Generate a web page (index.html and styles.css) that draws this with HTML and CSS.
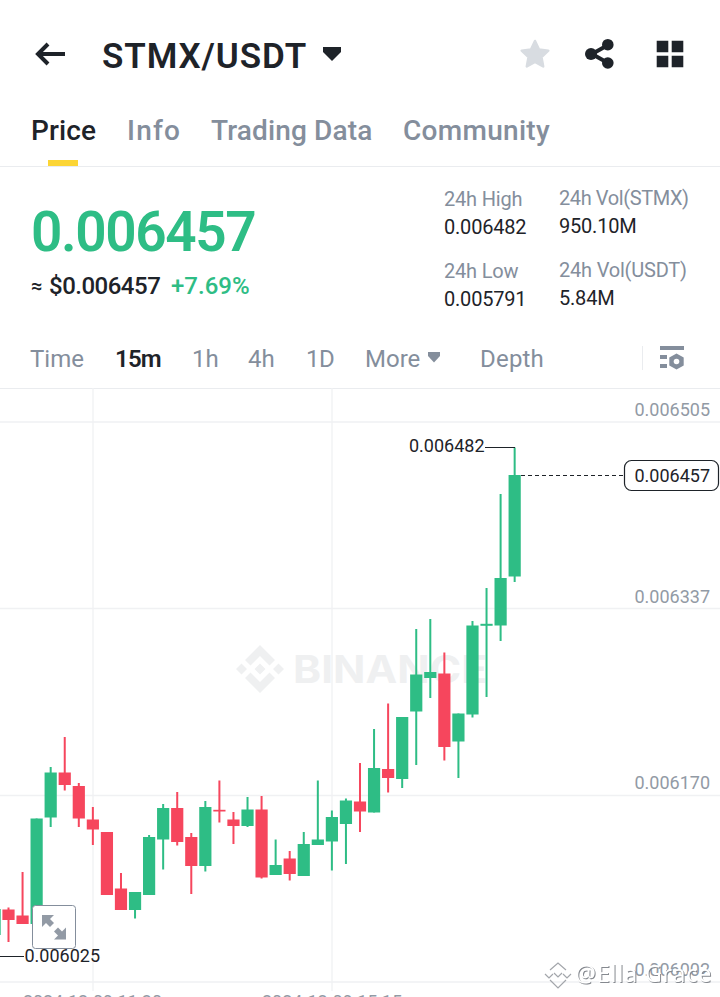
FILE: index.html
```
<!DOCTYPE html>
<html lang="en">
<head>
<meta charset="utf-8">
<title>STMX/USDT</title>
<link rel="stylesheet" href="styles.css">
</head>
<body>
<header class="topbar">
  <svg class="back" width="32" height="26" viewBox="0 0 32 26"><path d="M31 13H4M14 3 4 13 14 23" fill="none" stroke="#1e2329" stroke-width="4"/></svg>
  <h1 class="pair">STMX/USDT</h1>
  <svg class="caret" width="20" height="15" viewBox="0 0 20 15"><path d="M1 0h18v5L10 14 1 5z" fill="#1e2329"/></svg>
  <svg class="star" width="32" height="32" viewBox="0 0 32 32"><path d="m16 3 4 8.500 9.300 1.200-6.800 6.500 1.700 9.300-8.200-4.500-8.200 4.500 1.700-9.300L2.700 12.700l9.300-1.200z" fill="#d8dce1" stroke="#d8dce1" stroke-width="2.500" stroke-linejoin="round"/></svg>
  <svg class="share" width="30" height="32" viewBox="0 0 30 32"><path d="M23 7 7 16l16 9" fill="none" stroke="#1e2329" stroke-width="4"/><g fill="#1e2329"><circle cx="22.800" cy="6.700" r="5.800"/><circle cx="6" cy="16" r="6"/><circle cx="22.800" cy="25" r="5.800"/></g></svg>
  <svg class="apps" width="28" height="28" viewBox="0 0 28 28"><path d="M.7.700h11.600v11.600H.7zM15.700.700h11.600v11.600H15.700zM.7 15.700h11.600v11.600H.7zM15.700 15.700h11.600v11.600H15.700z" fill="#1e2329"/></svg>
</header>
<nav class="tabs">
  <span class="tab active t-price">Price</span>
  <span class="tab t-info">Info</span>
  <span class="tab t-data">Trading Data</span>
  <span class="tab t-comm">Community</span>
</nav>
<section class="summary">
  <div class="quote">
    <div class="last">0.006457</div>
    <div class="sub"><span class="approx">≈</span><span class="usd">$0.006457</span><span class="change">+7.69%</span></div>
  </div>
  <dl class="stats left">
    <dt>24h High</dt><dd>0.006482</dd>
    <dt>24h Low</dt><dd>0.005791</dd>
  </dl>
  <dl class="stats right">
    <dt>24h Vol(STMX)</dt><dd>950.10M</dd>
    <dt class="vol-quote">24h Vol(USDT)</dt><dd>5.84M</dd>
  </dl>
</section>
<nav class="intervals">
  <span class="i-time">Time</span>
  <span class="i-15 on">15m</span>
  <span class="i-1h">1h</span>
  <span class="i-4h">4h</span>
  <span class="i-1d">1D</span>
  <span class="i-more">More</span>
  <svg class="more-caret" width="14" height="12" viewBox="0 0 14 12"><path d="M1 0h12v4L7 10.500 1 4z" fill="#848e9c"/></svg>
  <span class="i-depth">Depth</span>
  <i class="divider"></i>
  <svg class="settings" width="26" height="26" viewBox="0 0 26 26"><path d="M0 1h24v4H0zM0 10h7v4H0zM0 19h7v4H0z" fill="#848e9c"/><path d="m16.500 8.500 7.200 4v8l-7.200 4-7.200-4v-8z" fill="#848e9c"/><circle cx="16.500" cy="16.500" r="2.800" fill="#fff"/></svg>
</nav>
<main class="chart">
  <svg id="chart" width="720" height="609" viewBox="0 388 720 609">
    <path class="grid" d="M0 422H720M0 608.500H720M0 795.500H720M0 982H720M93 388V991M332 388V991"/>
    <g class="brand">
      <path d="m260 645 15 15-5.500 5.500-9.500-9.500-9.500 9.500-5.500-5.500zM260 693l15-15-5.500-5.500-9.500 9.500-9.500-9.500-5.500 5.500zM236 669l5.500-5.500 5.500 5.500-5.500 5.500zM273 669l5.500-5.500 5.500 5.500-5.500 5.500zM254.500 669l5.500-5.500 5.500 5.500-5.500 5.500z"/>
      <text x="293" y="683" textLength="194" lengthAdjust="spacingAndGlyphs">BINANCE</text>
    </g>
    <g id="candles"></g>
    <g class="axis">
      <text x="634.500" y="416">0.006505</text>
      <text x="634.500" y="603">0.006337</text>
      <text x="634.500" y="789">0.006170</text>
      <text x="634.500" y="976">0.006002</text>
      <text x="23" y="1008" textLength="139">2024-12-09 11:30</text>
      <text x="262" y="1008" textLength="140">2024-12-09 15:15</text>
    </g>
    <path class="mark" d="M485 447.500H515M0 956.500H24"/>
    <path class="mark dash" d="M521 475.500H624"/>
    <rect class="tag" x="624.500" y="460.500" width="94" height="30" rx="7"/>
    <g class="ink">
      <text x="409" y="452">0.006482</text>
      <text x="634.500" y="482">0.006457</text>
    </g>
    <rect class="expand" x="32.500" y="905.500" width="43" height="43" rx="3"/>
    <path d="M42 915h12l-4 4 4 4-4 4-4-4-4 4zM66 939.500H54l4-4-4-4 4-4 4 4 4-4z" fill="#929aa5"/>
    <g class="ink"><text x="24.500" y="962">0.006025</text></g>
    <g class="credit">
      <path d="m550 970 8-7 8 7M545 974l4 4 4-4M554 973l4 4 4-4M563 974l4 4 4-4M550 980l8 8 8-8"/>
      <text x="575.300" y="982.300" textLength="136">@Ella Grace</text>
    </g>
  </svg>
</main>
<script src="chart.js"></script>
</body>
</html>
```
FILE: styles.css
```
* { box-sizing: border-box; margin: 0; }
body { width: 720px; height: 997px; overflow: hidden; background: #fff; color: #1e2329; font-family: Roboto, "Liberation Sans", sans-serif; }
svg { display: block; flex: none; }
.topbar { display: flex; align-items: center; height: 108px; padding-left: 34px; }
.pair { width: 220px; margin-left: 36px; font-size: 35px; line-height: 40px; font-weight: 600; letter-spacing: .9px; white-space: nowrap; margin-top: 5px; }
.star { margin-left: 177px; }
.share { margin-left: 34px; }
.apps { margin-left: 41px; }
.tabs { display: flex; height: 59px; border-bottom: 1px solid #eaecef; font-size: 28px; line-height: 46px; font-weight: 500; color: #848e9c; padding-left: 31px; white-space: nowrap; letter-spacing: .15px; }
.tab { height: 58px; }
.active { color: #1e2329; background: linear-gradient(#fcd535, #fcd535) 17px 52px / 30px 6px no-repeat; }
.t-price { width: 96px; }
.t-info { width: 84px; letter-spacing: 1.2px; }
.t-data { width: 192px; }
.t-comm { letter-spacing: .3px; }
.summary { display: flex; height: 161px; }
.quote { width: 444px; padding: 31px 0 0 31px; white-space: nowrap; }
.last { font-size: 55px; line-height: 68px; font-weight: 600; color: #2ebd85; letter-spacing: -1.4px; }
.sub { display: flex; font-size: 24px; line-height: 32px; font-weight: 500; margin-top: 4px; }
.approx { width: 18px; font-size: 20px; }
.usd { width: 122px; letter-spacing: -.5px; }
.change { color: #2ebd85; }
.stats { font-size: 20px; line-height: 28px; white-space: nowrap; letter-spacing: -.2px; }
.stats dt { color: #848e9c; }
.stats dd { margin-bottom: 16px; }
.left { width: 115px; padding-top: 18px; }
.right { padding-top: 17px; }
.right dt { letter-spacing: -.4px; }
.right .vol-quote { letter-spacing: -.2px; }
.intervals { display: flex; align-items: center; height: 61px; padding-left: 30px; border-bottom: 1px solid #eaecef; font-size: 24px; color: #848e9c; white-space: nowrap; }
.intervals span { flex: none; line-height: 28px; padding-top: 1px; }
.intervals .on { color: #1e2329; font-weight: 600; letter-spacing: -.8px; }
.i-time { width: 85px; }
.i-15 { width: 77px; }
.i-1h { width: 56px; }
.i-4h { width: 58px; }
.i-1d { width: 59px; letter-spacing: -.5px; }
.i-more { width: 62px; }
.i-depth { width: 162px; margin-left: 39px; letter-spacing: .2px; }
.divider { width: 1px; height: 24px; background: #eaecef; }
.settings { margin-left: 17px; }
.chart { height: 608px; }
#chart { margin-top: -1px; }
.grid { fill: none; stroke: #f0f1f3; stroke-width: 1.3; }
.brand { fill: #eff0f1; font: 700 38px Inter, sans-serif; }
.axis { font-size: 18px; fill: #929aa5; }
.ink { font-size: 18px; fill: #1e2329; }
.mark { fill: none; stroke: #1e2329; stroke-width: 1.2; }
.dash { stroke-dasharray: 4 3; }
.tag { fill: #fff; stroke: #1e2329; stroke-width: 1.2; }
.expand { fill: #fff; stroke: #848e9c; }
.up { fill: #2ebd85; }
.down { fill: #f6465d; }
.credit { font: 23px "Noto Sans", sans-serif; fill: #fff; }
.credit text { filter: drop-shadow(1px 1px 0 #85898f); }
.credit path { fill: none; stroke: #a3a6ab; stroke-width: 1.2; }
```
FILE: chart.js
```
// [direction, body top, body bottom, wick top, wick bottom]
const candles = [
  ["down",909.5,920,907.5,942],["down",915.5,924,872,924],["up",818.5,924,818.5,924],
  ["up",772.5,817.5,767,827],["down",772.5,785,737,790.5],["down",786,818.5,783,827],
  ["down",819.5,829.5,807,845],["down",832,895,832,895],["down",888.5,910,873,910],
  ["up",892,910,892,918.5],["up",837,895,835,895],["up",808,839.5,804,869.5],
  ["down",808,842,792,845.5],["down",837,866,833,894],["up",807,866,801,871.5],
  ["down",809.8,811.5,780.5,822.5],["down",819.5,826,812,844],["up",809.5,826,797,827],
  ["down",809.5,877.5,796,878.5],["up",865,875,839.5,875],["down",858.5,874,851,880.5],
  ["up",844,876,832,876],["up",839.5,845,780.5,845],["up",817,841.5,810.5,870.5],
  ["up",800.5,824,798.5,864],["down",801.5,811.5,763,832],["up",768,812.5,729,812.5],
  ["down",769,778,703.5,792.5],["up",717,779,717,788],["up",674.5,711.5,629,765],
  ["up",672,678,619,698],["down",673.5,747,652.5,760.5],["up",713.5,741.5,713.5,778],
  ["up",625.5,714.5,621,717.5],["up",623.8,625.8,588,697],["up",578,625.5,494,641],
  ["up",475,576.5,447.5,582]
];
const bar = (cls, x, y, w, h) => `<rect class="${cls}" x="${x}" y="${y}" width="${w}" height="${h}"/>`;
document.getElementById("candles").innerHTML = bar("up", 0, 909, 0.7, 26) + candles.map(([cls, top, bottom, high, low], i) => {
  const x = 8.5 + i * 14.06;
  return bar(cls, x - 1, high, 2, low - high) + bar(cls, x - 6.1, top, 12.2, bottom - top);
}).join("");
```
